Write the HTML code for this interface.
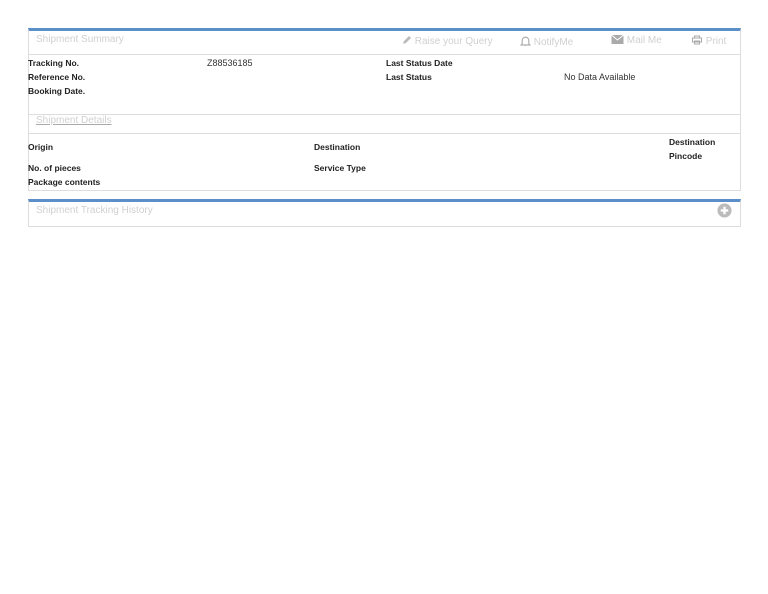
<!DOCTYPE html>
<html><head><style>
body{margin:0;width:768px;height:594px;background:#fff;font-family:"Liberation Sans",sans-serif;position:relative;overflow:hidden}
.a{position:absolute;white-space:nowrap}
.b{font-size:8.5px;font-weight:bold;color:#222}
.n{font-size:9px;color:#333}
.l{font-size:10px;color:#d0d0d0}
.box{position:absolute;border:1px solid #ddd;box-sizing:border-box}
</style></head><body>
<div class="box" style="left:28px;top:28px;width:713px;height:163px;border-top:3px solid #5b8fc7"></div>
<div style="position:absolute;left:29px;top:54px;width:711px;height:1px;background:#ddd"></div>
<div class="a l" style="left:36px;top:34px">Shipment Summary</div>
<div class="a l" style="left:402px;top:35px"><svg width="10" height="10" viewBox="0 0 10 10" style="vertical-align:-1px"><path d="M1 9l1-3 5-5 2 2-5 5z" fill="#bbb"/></svg> Raise your Query</div>
<div class="a l" style="left:520px;top:35px"><svg width="11" height="11" viewBox="0 0 10 10" style="vertical-align:-1px"><path d="M2 8V5a3 3 0 016 0v3l1 1H1z M4 9.3h2" fill="none" stroke="#aaa"/></svg> NotifyMe</div>
<div class="a l" style="left:611px;top:35px"><svg width="13" height="9" viewBox="0 0 12 9" style="vertical-align:-1px"><rect width="12" height="9" fill="#aaa"/><path d="M0 0l6 5 6-5" fill="none" stroke="#fff"/></svg> Mail Me</div>
<div class="a l" style="left:691px;top:35px"><svg width="12" height="10" viewBox="0 0 11 10" style="vertical-align:-1px"><path d="M3 3V1h5v2M1 3h9v4H1zM3 6h5v3H3z" fill="none" stroke="#aaa"/></svg> Print</div>
<div class="a b" style="left:28px;top:58px">Tracking No.</div>
<div class="a n" style="left:207px;top:58px">Z88536185</div>
<div class="a b" style="left:386px;top:58px">Last Status Date</div>
<div class="a b" style="left:28px;top:72px">Reference No.</div>
<div class="a b" style="left:386px;top:72px">Last Status</div>
<div class="a n" style="left:564px;top:72px">No Data Available</div>
<div class="a b" style="left:28px;top:86px">Booking Date.</div>
<div class="box" style="left:29px;top:114px;width:711px;height:20px;border-left:none;border-right:none"></div>
<div class="a l" style="left:36px;top:115px;text-decoration:underline;text-decoration-color:#aaa">Shipment Details</div>
<div class="a b" style="left:28px;top:142px">Origin</div>
<div class="a b" style="left:314px;top:142px">Destination</div>
<div class="a b" style="left:669px;top:135px;line-height:14px">Destination<br>Pincode</div>
<div class="a b" style="left:28px;top:163px">No. of pieces</div>
<div class="a b" style="left:314px;top:163px">Service Type</div>
<div class="a b" style="left:28px;top:177px">Package contents</div>
<div class="box" style="left:28px;top:199px;width:713px;height:28px;border-top:3px solid #5b8fc7"></div>
<div class="a l" style="left:36px;top:205px">Shipment Tracking History</div>
<svg class="a" style="left:717px;top:203px" width="15" height="15" viewBox="0 0 16 16"><circle cx="8" cy="8" r="7.5" fill="#bbb"/><path d="M8 4v8M4 8h8" stroke="#fff" stroke-width="2.4"/></svg>
</body></html>
